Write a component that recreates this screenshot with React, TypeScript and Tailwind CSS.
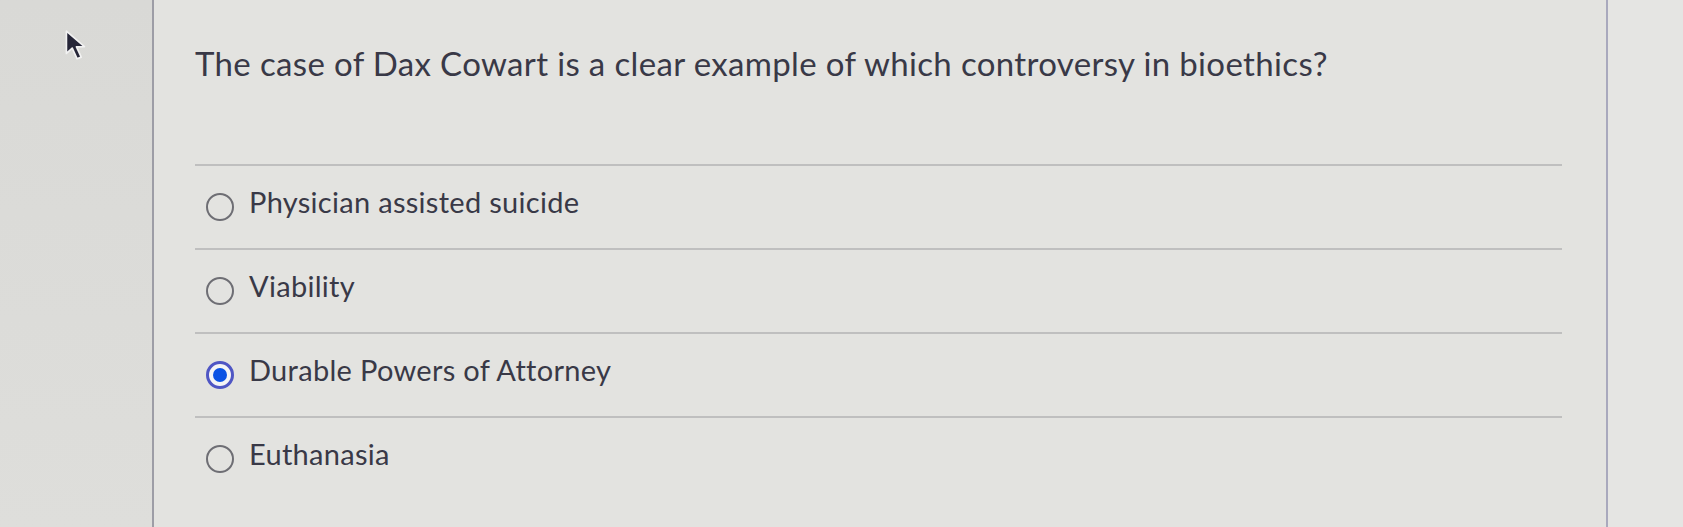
import React from 'react'

// 选项数据
const options = [
  { label: 'Physician assisted suicide', checked: false },
  { label: 'Viability', checked: false },
  { label: 'Durable Powers of Attorney', checked: true },
  { label: 'Euthanasia', checked: false }
]

const Radio: React.FC<{ checked: boolean }> = ({ checked }) => {
  if (checked) {
    return (
      <span className="flex h-[28px] w-[28px] shrink-0 items-center justify-center rounded-full border-[3px] border-[#4f56c4] bg-[#f4f4f6]">
        <span className="h-[14px] w-[14px] rounded-full bg-[#0b52e4]" />
      </span>
    )
  }
  return <span className="block h-[28px] w-[28px] shrink-0 rounded-full border-[2.5px] border-[#6e6e74]" />
}

const Cursor: React.FC = () => (
  <svg className="absolute left-[62px] top-[28px]" width="30" height="36" viewBox="0 0 28 34">
    <path
      d="M4 3 L4 24 L9.5 19 L14 29 L18 27.5 L13.5 17.8 L21 17.5 Z"
      fill="#262638"
      stroke="#f2f2f2"
      strokeWidth="1.6"
      strokeLinejoin="round"
    />
  </svg>
)

export default function App() {
  return (
    <div
      className="relative flex h-[527px] w-full overflow-hidden bg-[#dcdcd9] text-[#393947]"
      style={{ fontFamily: 'Lato, "Open Sans", sans-serif' }}
    >
      <Cursor />

      {/* 左侧留白 */}
      <div className="w-[152px] shrink-0 bg-gradient-to-b from-[#d9d9d6] to-[#dededb]" />

      {/* 题目面板 */}
      <div className="flex w-[1456px] shrink-0 flex-col border-x-2 border-l-[#9d9da6] border-r-[#a9a9bd] bg-[#e3e3e0] pl-[41px] pr-[44px]">
        <h1 className="pt-[43px] text-[33px] font-normal leading-[40px] tracking-[0.35px]">
          The case of Dax Cowart is a clear example of which controversy in bioethics?
        </h1>

        <div className="mt-[81px]">
          {options.map((o) => (
            <div key={o.label} className="flex h-[84px] items-center border-t-2 border-[#bfbfbf] pl-[11px]">
              <Radio checked={o.checked} />
              <span className="mb-[10px] ml-[15px] text-[29px] leading-[34px] tracking-[0.3px]">{o.label}</span>
            </div>
          ))}
        </div>
      </div>

      {/* 右侧留白 */}
      <div className="flex-1 bg-[#e5e5e3]" />
    </div>
  )
}
